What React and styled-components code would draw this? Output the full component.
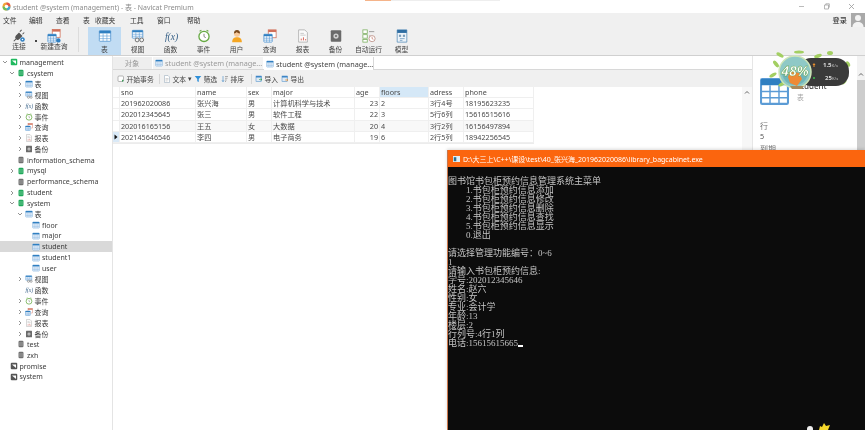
import React from 'react';
import styled, { createGlobalStyle } from 'styled-components';

const GlobalStyle = createGlobalStyle`
  html, body {
    margin: 0;
    background: #fff;
  }
  * {
    box-sizing: border-box;
  }
`;

const Shell = styled.div`
  position: relative;
  width: 865px;
  height: 430px;
  overflow: hidden;
  display: flex;
  flex-direction: column;
  background: #fff;
  color: #444;
  font-family: "Noto Sans", "Noto Sans CJK SC", sans-serif;
  font-size: 7.2px;
  filter: blur(0.4px);
`;

const TitleBar = styled.div`
  position: relative;
  height: 13px;
  flex: none;
  display: flex;
  align-items: center;
  gap: 2px;
  padding-left: 2px;
  color: #8a8a8a;
  font-size: 6.95px;
`;

const TopStrip = styled.div`
  position: absolute;
  top: 0;
  left: 365px;
  width: 135px;
  height: 1px;
  background: linear-gradient(90deg, #f5b48a 0 26px, #eee 26px);
`;

const WindowButtons = styled.div`
  margin-left: auto;
  display: flex;
  align-items: center;
  gap: 18px;
  padding-right: 10px;
`;

const MenuBar = styled.div`
  height: 14px;
  flex: none;
  display: flex;
  align-items: center;
  background: #f0f0f0;
  color: #333;
`;

const MenuItem = styled.span`
  width: ${(p) => p.$w}px;
  padding-left: 3px;
  white-space: nowrap;
  font-size: 6.8px;
`;

const Account = styled.div`
  margin-left: auto;
  display: flex;
  align-items: center;
  gap: 4px;
  color: #333;
  font-weight: 500;
`;

const Avatar = styled.div`
  width: 14px;
  height: 14px;
  background: #a9a9a9;
  overflow: hidden;
`;

const Toolbar = styled.div`
  height: 29px;
  flex: none;
  display: flex;
  background: #f0f0f0;
  border-bottom: 1px solid #d0d0d0;
`;

const ToolGroup = styled.div`
  display: flex;
  padding-left: 2px;
  width: 79px;
  border-right: 1px solid #dcdcdc;
  margin: 0 9px 3px 0;
`;

const Tool = styled.div`
  position: relative;
  width: ${(p) => p.$w || 33}px;
  display: flex;
  flex-direction: column;
  align-items: center;
  justify-content: space-between;
  padding: 2px 0 1px;
  background: ${(p) => (p.$active ? '#c1dcf3' : 'transparent')};
  color: #444;
  font-size: 6.8px;
  line-height: 8px;
  white-space: nowrap;
`;

const ToolCaret = styled.i`
  position: absolute;
  right: -1px;
  top: 13px;
  width: 2px;
  height: 1.500px;
  background: #444;
`;

const Body = styled.div`
  flex: 1;
  min-height: 0;
  display: flex;
`;

const Sidebar = styled.nav`
  width: 113px;
  flex: none;
  padding-top: 1px;
  border-right: 1px solid #e4e4e4;
`;

const TreeRow = styled.div`
  height: 10.85px;
  display: flex;
  align-items: center;
  gap: 2px;
  padding-left: ${(p) => p.$depth * 7.5 + 1.5}px;
  background: ${(p) => (p.$selected ? '#d9d9d9' : 'transparent')};
  color: #3c3c3c;
  font-size: 7px;
  white-space: nowrap;
`;

const Chevron = styled.svg`
  width: 6px;
  height: 6px;
  flex: none;
  visibility: ${(p) => (p.$none ? 'hidden' : 'visible')};
  transform: rotate(${(p) => (p.$open ? 90 : 0)}deg);
`;

const Glyph = styled.svg`
  width: ${(p) => p.$size}px;
  height: ${(p) => p.$size}px;
  flex: none;
`;

const Main = styled.main`
  flex: 1;
  min-width: 0;
  display: flex;
  flex-direction: column;
`;

const TabBar = styled.div`
  height: 14px;
  flex: none;
  display: flex;
  padding-top: 1px;
  border-bottom: 1px solid #d8d8d8;
`;

const Tab = styled.div`
  width: ${(p) => p.$w}px;
  margin-right: 1px;
  margin-bottom: ${(p) => (p.$active ? -1 : 0)}px;
  display: flex;
  align-items: center;
  justify-content: ${(p) => (p.$center ? 'center' : 'flex-start')};
  gap: 2px;
  padding-left: ${(p) => (p.$center ? 0 : 2)}px;
  background: ${(p) => (p.$active ? '#fff' : p.$center ? '#eee' : '#f3f3f3')};
  color: ${(p) => (p.$active ? '#444' : '#9a9a9a')};
  border-right: 1px solid ${(p) => (p.$active ? '#d8d8d8' : 'transparent')};
  font-size: 7.3px;
  white-space: nowrap;
`;

const SubToolbar = styled.div`
  height: 17px;
  flex: none;
  display: flex;
  align-items: center;
  padding-left: 3.5px;
  background: #f0f0f0;
  font-size: 6.8px;
  color: #444;
`;

const SubTool = styled.div`
  width: ${(p) => p.$w}px;
  flex: none;
  display: flex;
  align-items: center;
  gap: 2px;
  white-space: nowrap;
`;

const SubSeparator = styled.i`
  width: 1px;
  height: 10px;
  flex: none;
  margin: 0 ${(p) => p.$gap}px;
  background: #d6d6d6;
`;

const GridArea = styled.div`
  flex: 1;
  min-height: 0;
  display: flex;
`;

const GridPane = styled.div`
  flex: 1;
  min-width: 0;
`;

const DataGrid = styled.div`
  display: grid;
  width: 421px;
  grid-template-columns: 7px 76px 51px 25px 83px 25px 49px 35px 70px;
  grid-template-rows: 11px repeat(4, 11.3px);
  border-bottom: 1px solid #ececec;
`;

const GridCell = styled.div`
  display: flex;
  align-items: center;
  justify-content: ${(p) => (p.$right ? 'flex-end' : 'flex-start')};
  padding: 0 1px;
  background: ${(p) => (p.$fill ? p.$fill : 'transparent')};
  border-right: 1px solid #efefef;
  border-bottom: 1px solid #efefef;
  color: #4a4a4a;
  font-size: 7.2px;
  white-space: nowrap;
  overflow: hidden;
`;

const ScrollColumn = styled.div`
  width: 10px;
  flex: none;
  display: flex;
  justify-content: center;
  padding-top: 3px;
  background: #f7f7f7;
`;

const SidePanel = styled.aside`
  width: 113px;
  flex: none;
  display: flex;
  border-left: 1px solid #e6e6e6;
`;

const SideContent = styled.div`
  flex: 1;
  padding: 22px 0 0 7px;
  color: #555;
`;

const SideHeader = styled.div`
  display: flex;
  gap: 8px;
  margin-bottom: 12.5px;
`;

const SideName = styled.div`
  padding-top: 2px;
  font-size: 8px;
  font-weight: 500;
  line-height: 12px;
  color: #444;
`;

const SideType = styled.div`
  color: #a5a5a5;
  font-size: 6.8px;
  font-weight: 400;
`;

const SideLabel = styled.div`
  font-size: 8px;
  line-height: 11px;
  color: #777;
`;

const SideValue = styled.div`
  font-size: 7.2px;
  line-height: 11px;
  margin-bottom: 1px;
`;

const SideScroll = styled.div`
  width: 8px;
  flex: none;
  padding-top: 16px;
  background: linear-gradient(#f2f2f2 0 24px, #cdcdcd 24px);
  display: flex;
  justify-content: center;
  align-items: flex-start;
`;

const ConsoleWindow = styled.section`
  position: absolute;
  left: 447px;
  top: 150px;
  right: 0;
  bottom: 0;
  display: flex;
  flex-direction: column;
  background: #0c0c0c;
  border-left: 1.5px solid #c9764a;
  box-shadow: 0 -1px 3px rgba(0, 0, 0, 0.15);
`;

const ConsoleTitle = styled.header`
  height: 17px;
  flex: none;
  display: flex;
  align-items: center;
  gap: 3.5px;
  padding-left: 4.5px;
  background: #fb650e;
  color: #fff;
  font-size: 7px;
  white-space: nowrap;
`;

const ConsoleBody = styled.div`
  padding-top: 10px;
  color: #c4c4c4;
  font-family: "Liberation Serif", "Noto Sans CJK SC", serif;
  font-size: 9px;
`;

const ConsoleLine = styled.div`
  height: 9px;
  line-height: 9px;
  padding-left: ${(p) => (p.$indent ? 18 : 0)}px;
  white-space: nowrap;
`;

const Cursor = styled.span`
  display: inline-block;
  width: 4.5px;
  height: 2px;
  margin-bottom: -1px;
  background: #fff;
`;

const SpeedWidget = styled.svg`
  position: absolute;
  left: 768px;
  top: 48px;
  width: 86px;
  height: 46px;
`;

const DesktopPet = styled.svg`
  position: absolute;
  left: 806px;
  top: 423px;
  width: 28px;
  height: 7px;
`;

const ChevronIcon = ({ open, none }) => (
  <Chevron viewBox="0 0 6 6" $open={open} $none={none}>
    <path d="M2 1l2 2-2 2" fill="none" stroke="#777" strokeWidth="0.8" />
  </Chevron>
);

const grid = (x, y, w, h, color, head) => (
  <g>
    <rect x={x} y={y} width={w} height={h} fill="#fff" stroke={color} strokeWidth="1" rx="0.6" />
    <rect x={x} y={y} width={w} height={h / 4} fill={head} />
    <path
      d={`M${x} ${y + h / 2}h${w}M${x} ${y + (h * 3) / 4}h${w}M${x + w / 3} ${y + h / 4}v${(h * 3) / 4}M${x + (w * 2) / 3} ${y + h / 4}v${(h * 3) / 4}`}
      stroke={color}
      strokeWidth="0.7"
      fill="none"
    />
  </g>
);

const glyphs = {
  table: grid(1.5, 2, 13, 12, '#5b9bd5', '#2f7fc1'),
  view: (
    <g>
      {grid(1.5, 1.5, 12, 9, '#5b9bd5', '#2f7fc1')}
      <circle cx="7" cy="12.5" r="2.2" fill="#f4f4f4" stroke="#555" strokeWidth="0.9" />
      <circle cx="12.2" cy="12.5" r="2.2" fill="#f4f4f4" stroke="#555" strokeWidth="0.9" />
    </g>
  ),
  func: (
    <text x="1" y="12" fontFamily="Liberation Serif" fontStyle="italic" fontSize="11" fill="#355f86">
      f(x)
    </text>
  ),
  event: (
    <g>
      <circle cx="8" cy="8.5" r="5.8" fill="#fff" stroke="#66a943" strokeWidth="1.5" />
      <path d="M8 5.5v3.2l2 1.2" stroke="#666" strokeWidth="0.9" fill="none" />
      <path d="M3 2.5l2-1M13 2.5l-2-1" stroke="#66a943" strokeWidth="1.3" />
    </g>
  ),
  user: (
    <g>
      <path d="M2.5 15c0-4 2.4-5.5 5.5-5.5s5.500 1.500 5.500 5.500z" fill="#f5a623" />
      <circle cx="8" cy="5.500" r="3.500" fill="#f7c99b" />
      <path d="M4.500 5c0-2.500 1.500-3.800 3.500-3.800s3.500 1.300 3.500 3.800c-2 0-3-.6-3.800-1.500C7 4.500 6 5 4.500 5z" fill="#7a4a1f" />
    </g>
  ),
  query: (
    <g>
      <rect x="6" y="1" width="9" height="9" fill="#fff" stroke="#d0705a" strokeWidth="0.9" />
      <rect x="6" y="1" width="9" height="2.500" fill="#d0705a" />
      {grid(1, 6, 9.500, 9, '#5b9bd5', '#2f7fc1')}
    </g>
  ),
  report: (
    <g>
      <path d="M3 1h7l3 3v11H3z" fill="#fbfbfb" stroke="#a9a9a9" strokeWidth="0.9" />
      <path d="M5 5h4M5 7h6" stroke="#b5b5b5" strokeWidth="0.8" />
      <path d="M6 13v-2M8.500 13V9.500M11 13v-1.500" stroke="#d9655a" strokeWidth="1.100" />
    </g>
  ),
  backup: (
    <g>
      <rect x="2" y="1.500" width="12" height="13" rx="1" fill="#6a6a6a" />
      <circle cx="8" cy="8" r="3" fill="#cfcfcf" />
      <circle cx="8" cy="8" r="1.200" fill="#6a6a6a" />
    </g>
  ),
  auto: (
    <g>
      <rect x="1" y="1" width="5" height="4" fill="#fff" stroke="#79ae5d" strokeWidth="0.9" />
      <rect x="1" y="6.500" width="5" height="4" fill="#fff" stroke="#79ae5d" strokeWidth="0.9" />
      <rect x="1" y="12" width="5" height="3" fill="#fff" stroke="#79ae5d" strokeWidth="0.9" />
      <path d="M8 3h6M8 8h2" stroke="#8a8a8a" strokeWidth="0.9" />
      <circle cx="11.500" cy="11" r="3.500" fill="#fff" stroke="#b98a80" strokeWidth="0.9" />
      <path d="M11.500 9v2l1.500.8" stroke="#b95a4a" strokeWidth="0.7" fill="none" />
    </g>
  ),
  model: (
    <g>
      <path d="M2.500 1h11v14h-11z" fill="#eef4fa" stroke="#5b8fb9" strokeWidth="0.9" />
      <rect x="2.500" y="1" width="11" height="3.500" fill="#2f6ea3" />
      <rect x="4.500" y="6.500" width="2.500" height="2.500" fill="#7a9db9" />
      <rect x="9" y="6.500" width="2.500" height="2.500" fill="#7a9db9" />
      <path d="M5.500 11h5.500M5.500 13h3" stroke="#5b8fb9" strokeWidth="0.8" />
    </g>
  ),
  plug: (
    <g>
      <path d="M2 14l3-3M9 3l2-2M12 6l2-2" stroke="#555" strokeWidth="1.200" />
      <path d="M4.500 7.500L8 4l4 4-3.500 3.500a2.800 2.800 0 01-4-4z" fill="#555" />
      <circle cx="12" cy="12" r="2.600" fill="#2f7fc1" />
      <circle cx="12" cy="12" r="0.900" fill="#fff" />
    </g>
  ),
  newQuery: (
    <g>
      <rect x="6" y="0.500" width="9" height="9" fill="#fff" stroke="#d0705a" strokeWidth="0.9" />
      <rect x="6" y="0.500" width="9" height="2.500" fill="#d0705a" />
      {grid(1, 6, 9.500, 9, '#5b9bd5', '#2f7fc1')}
      <circle cx="13" cy="13" r="2.500" fill="#2f7fc1" />
    </g>
  ),
  connection: (
    <g>
      <rect x="1.500" y="1.500" width="13" height="13" rx="2" fill="#20b95f" />
      <path d="M4 5l8 7V5z" fill="#fff" />
    </g>
  ),
  closedConnection: (
    <g>
      <rect x="1.500" y="1.500" width="13" height="13" rx="2" fill="#555" />
      <path d="M4 5l8 7V5z" fill="#fff" />
    </g>
  ),
  dbOn: (
    <g>
      <rect x="3" y="1.500" width="10" height="13" rx="2.500" fill="#1fa85a" />
      <path d="M3.500 6h9M3.500 10h9" stroke="#c8f0d6" strokeWidth="0.9" />
    </g>
  ),
  dbOff: (
    <g>
      <rect x="3" y="1.500" width="10" height="13" rx="2.500" fill="#6f6f6f" />
      <path d="M3.500 6h9M3.500 10h9" stroke="#e4e4e4" strokeWidth="0.9" />
    </g>
  ),
  start: (
    <g>
      <rect x="2" y="2" width="11" height="11" rx="2" fill="#fff" stroke="#8a8a8a" strokeWidth="1.200" />
      <path d="M10 9l4 2.500-4 2.500z" fill="#3f9e5c" />
    </g>
  ),
  text: (
    <g>
      <path d="M3 1h7l3 3v11H3z" fill="#fff" stroke="#8fa3b5" strokeWidth="1" />
      <path d="M5 7h6M5 9.500h6M5 12h4" stroke="#9a9a9a" strokeWidth="0.8" />
    </g>
  ),
  filter: <path d="M1.500 2h13L9.500 8v6l-3-1.500V8z" fill="#2f8fd8" />,
  sort: (
    <g>
      <path d="M4 2v11M2 10.500L4 13.500 6 10.500" stroke="#2f7fc1" strokeWidth="1.100" fill="none" />
      <path d="M8 3h6M8 6.500h5M8 10h3.500M8 13h2" stroke="#666" strokeWidth="1" />
    </g>
  ),
  importData: (
    <g>
      <rect x="2" y="2" width="11" height="11" fill="#dfeaf5" stroke="#3d85c6" strokeWidth="1" />
      <rect x="2" y="2" width="11" height="3" fill="#3d85c6" />
      <path d="M8 9h6M11 7l3 2-3 2" stroke="#2e9b57" strokeWidth="1.200" fill="none" />
    </g>
  ),
  exportData: (
    <g>
      <rect x="2" y="2" width="11" height="11" fill="#dfeaf5" stroke="#3d85c6" strokeWidth="1" />
      <rect x="2" y="2" width="11" height="3" fill="#3d85c6" />
      <path d="M8 10h6M11 8l3 2-3 2" stroke="#e08a2e" strokeWidth="1.200" fill="none" />
    </g>
  ),
  app: (
    <g>
      <circle cx="8" cy="8" r="7" fill="#f4a43a" />
      <path d="M8 1a7 7 0 017 7H8z" fill="#e2574c" />
      <path d="M8 8h7a7 7 0 01-7 7z" fill="#3fa9d6" />
      <path d="M8 8v7a7 7 0 01-7-7z" fill="#6cbf5a" />
      <circle cx="8" cy="8" r="3.200" fill="#fff" />
    </g>
  ),
};

const Icon = ({ kind, size = 8 }) => (
  <Glyph viewBox="0 0 16 16" $size={size}>
    {glyphs[kind]}
  </Glyph>
);

const objectGroup = [
  { depth: 2, chevron: true, icon: 'view', label: '视图' },
  { depth: 2, chevron: true, icon: 'func', label: '函数' },
  { depth: 2, chevron: true, icon: 'event', label: '事件' },
  { depth: 2, chevron: true, icon: 'query', label: '查询' },
  { depth: 2, chevron: true, icon: 'report', label: '报表' },
  { depth: 2, chevron: true, icon: 'backup', label: '备份' },
];

const tree = [
  { depth: 0, chevron: true, open: true, icon: 'connection', label: 'management' },
  { depth: 1, chevron: true, open: true, icon: 'dbOn', label: 'csystem' },
  { depth: 2, chevron: true, icon: 'table', label: '表' },
  ...objectGroup,
  { depth: 1, icon: 'dbOff', label: 'information_schema' },
  { depth: 1, chevron: true, icon: 'dbOn', label: 'mysql' },
  { depth: 1, icon: 'dbOff', label: 'performance_schema' },
  { depth: 1, chevron: true, icon: 'dbOn', label: 'student' },
  { depth: 1, chevron: true, open: true, icon: 'dbOn', label: 'system' },
  { depth: 2, chevron: true, open: true, icon: 'table', label: '表' },
  { depth: 3, icon: 'table', label: 'floor' },
  { depth: 3, icon: 'table', label: 'major' },
  { depth: 3, icon: 'table', label: 'student', selected: true },
  { depth: 3, icon: 'table', label: 'student1' },
  { depth: 3, icon: 'table', label: 'user' },
  ...objectGroup.map((row) => (row.icon === 'func' ? { ...row, chevron: false } : row)),
  { depth: 1, icon: 'dbOff', label: 'test' },
  { depth: 1, icon: 'dbOff', label: 'zxh' },
  { depth: 0, icon: 'closedConnection', label: 'promise' },
  { depth: 0, icon: 'closedConnection', label: 'system' },
];

const menus = [
  ['文件', 26],
  ['编辑', 27],
  ['查看', 27],
  ['表', 12],
  ['收藏夹', 35],
  ['工具', 27],
  ['窗口', 30],
  ['帮助', 30],
];

const tools = [
  ['table', '表', true],
  ['view', '视图'],
  ['func', '函数'],
  ['event', '事件'],
  ['user', '用户'],
  ['query', '查询'],
  ['report', '报表'],
  ['backup', '备份'],
  ['auto', '自动运行'],
  ['model', '模型'],
];

const columns = ['sno', 'name', 'sex', 'major', 'age', 'floors', 'adress', 'phone'];

const rows = [
  ['201962020086', '张兴海', '男', '计算机科学与技术', '23', '2', '3行4号', '18195623235'],
  ['202012345645', '张三', '男', '软件工程', '22', '3', '5行6列', '15616515616'],
  ['202016165156', '王五', '女', '大数据', '20', '4', '3行2列', '16156497894'],
  ['202145646546', '李四', '男', '电子商务', '19', '6', '2行5列', '18942256545'],
];

const consoleLines = [
  ['图书馆书包柜预约信息管理系统主菜单'],
  ['1.书包柜预约信息添加', true],
  ['2.书包柜预约信息修改', true],
  ['3.书包柜预约信息删除', true],
  ['4.书包柜预约信息查找', true],
  ['5.书包柜预约信息显示', true],
  ['0.退出', true],
  [''],
  ['请选择管理功能编号：0~6'],
  ['1'],
  ['请输入书包柜预约信息:'],
  ['学号:202012345646'],
  ['姓名:赵六'],
  ['性别:女'],
  ['专业:会计学'],
  ['年龄:13'],
  ['楼层:2'],
  ['行列号:4行1列'],
];

const UpArrow = () => (
  <svg width="6" height="5" viewBox="0 0 6 5">
    <path d="M1 3.500L3 1.500l2 2" fill="none" stroke="#555" strokeWidth="0.9" />
  </svg>
);

const Pointer = () => (
  <svg width="4" height="6" viewBox="0 0 4 6">
    <path d="M0.500 0.500L3.500 3 0.500 5.500z" fill="#111" />
  </svg>
);

const App = () => (
  <Shell>
    <GlobalStyle />
    <TitleBar>
      <TopStrip />
      <Icon kind="app" size={9} />
      <span>student @system (management) - 表 - Navicat Premium</span>
      <WindowButtons>
        <svg width="7" height="7" viewBox="0 0 7 7">
          <path d="M1 3.500h5" stroke="#aaa" strokeWidth="0.8" />
        </svg>
        <svg width="7" height="7" viewBox="0 0 7 7">
          <path d="M1.500 2h4v4h-4zM2.800 2V.8h3.500v3.500H5.500" fill="none" stroke="#999" strokeWidth="0.7" />
        </svg>
        <svg width="7" height="7" viewBox="0 0 7 7">
          <path d="M1 1l5 5M6 1L1 6" stroke="#999" strokeWidth="0.8" />
        </svg>
      </WindowButtons>
    </TitleBar>

    <MenuBar>
      {menus.map(([label, w]) => (
        <MenuItem key={label} $w={w}>
          {label}
        </MenuItem>
      ))}
      <Account>
        登录
        <Avatar>
          <svg width="14" height="14" viewBox="0 0 14 14">
            <circle cx="7" cy="5" r="3" fill="#f3f3f3" />
            <path d="M1.500 14c0-3.500 2.500-5 5.500-5s5.500 1.500 5.500 5z" fill="#f3f3f3" />
          </svg>
        </Avatar>
      </Account>
    </MenuBar>

    <Toolbar>
      <ToolGroup>
        <Tool $w={34}>
          <Icon kind="plug" size={14} />
          连接
          <ToolCaret />
        </Tool>
        <Tool $w={36}>
          <Icon kind="newQuery" size={14} />
          新建查询
        </Tool>
      </ToolGroup>
      {tools.map(([kind, label, active]) => (
        <Tool key={label} $active={active}>
          <Icon kind={kind} size={14} />
          {label}
        </Tool>
      ))}
    </Toolbar>

    <Body>
      <Sidebar>
        {tree.map((row, i) => (
          <TreeRow key={i} $depth={row.depth} $selected={row.selected}>
            <ChevronIcon open={row.open} none={!row.chevron} />
            <Icon kind={row.icon} />
            <span>{row.label}</span>
          </TreeRow>
        ))}
      </Sidebar>

      <Main>
        <TabBar>
          <Tab $w={39} $center>
            对象
          </Tab>
          <Tab $w={110}>
            <Icon kind="table" />
            student @system (manage...
          </Tab>
          <Tab $w={110} $active>
            <Icon kind="table" />
            student @system (manage...
          </Tab>
        </TabBar>

        <SubToolbar>
          <SubTool $w={39}>
            <Icon kind="start" />
            开始事务
          </SubTool>
          <SubSeparator $gap={3} />
          <SubTool $w={31}>
            <Icon kind="text" />
            文本 <span>▾</span>
          </SubTool>
          <SubTool $w={27}>
            <Icon kind="filter" />
            筛选
          </SubTool>
          <SubTool $w={27}>
            <Icon kind="sort" />
            排序
          </SubTool>
          <SubSeparator $gap={3} />
          <SubTool $w={26}>
            <Icon kind="importData" />
            导入
          </SubTool>
          <SubTool $w={30}>
            <Icon kind="exportData" />
            导出
          </SubTool>
        </SubToolbar>

        <GridArea>
          <GridPane>
            <DataGrid>
              <GridCell />
              {columns.map((col) => (
                <GridCell key={col} $fill={col === 'floors' ? '#d5e8f7' : undefined}>
                  {col}
                </GridCell>
              ))}
              {rows.map((row, r) => (
                <React.Fragment key={row[0]}>
                  <GridCell $fill={r === 3 ? '#d9e9f7' : undefined}>{r === 3 ? <Pointer /> : null}</GridCell>
                  {row.map((value, c) => (
                    <GridCell key={c} $right={c === 4} $fill={r === 2 ? '#f8f8f8' : undefined}>
                      {value}
                    </GridCell>
                  ))}
                </React.Fragment>
              ))}
            </DataGrid>
          </GridPane>
          <ScrollColumn>
            <UpArrow />
          </ScrollColumn>
        </GridArea>
      </Main>

      <SidePanel>
        <SideContent>
          <SideHeader>
            <Glyph viewBox="1 1.500 14 14" $size={29}>
              {glyphs.table}
            </Glyph>
            <SideName>
              student
              <SideType>表</SideType>
            </SideName>
          </SideHeader>
          <SideLabel>行</SideLabel>
          <SideValue>5</SideValue>
          <SideLabel>到期</SideLabel>
        </SideContent>
        <SideScroll>
          <UpArrow />
        </SideScroll>
      </SidePanel>
    </Body>

    <SpeedWidget viewBox="0 0 86 46">
      <g fill="#a3cf62">
        <ellipse cx="8" cy="16" rx="4" ry="1.800" transform="rotate(50 8 16)" />
        <ellipse cx="5" cy="27" rx="4" ry="1.600" transform="rotate(-30 5 27)" />
        <ellipse cx="12" cy="7" rx="4" ry="1.800" transform="rotate(30 12 7)" />
        <ellipse cx="31" cy="4" rx="5" ry="1.600" />
        <ellipse cx="50" cy="8" rx="4" ry="1.800" transform="rotate(-20 50 8)" />
        <ellipse cx="62" cy="5" rx="3" ry="2" />
        <ellipse cx="80" cy="16" rx="3" ry="1.800" transform="rotate(60 80 16)" />
        <ellipse cx="76" cy="34" rx="3" ry="1.600" transform="rotate(-40 76 34)" />
        <ellipse cx="14" cy="36" rx="4" ry="1.600" transform="rotate(-30 14 36)" />
      </g>
      <rect x="30" y="10" width="51" height="28" rx="13" fill="#3a3a3a" />
      <circle cx="27" cy="24" r="16" fill="#8fc9c6" stroke="#cfe6b8" strokeWidth="1.500" />
      <path d="M14 24a13 13 0 0026 0z" fill="#5ca8b0" opacity="0.6" />
      <path d="M22 23l9 2 3 6-5 7-7-3-2-6z" fill="#ee8a35" />
      <path d="M22 38h14l-2 3H24z" fill="#a98a5a" />
      <text
        x="27"
        y="28"
        textAnchor="middle"
        fontFamily="Noto Sans"
        fontSize="14"
        fontWeight="700"
        fontStyle="italic"
        fill="#fff"
        stroke="#5f9f3f"
        strokeWidth="0.4"
      >
        48%
      </text>
      <path d="M46 15l1.500 2h-1v2h-1v-2h-1z" fill="#f0922e" />
      <circle cx="46" cy="30" r="1" fill="#3fbf4f" />
      <text x="55" y="19" fontFamily="Noto Sans" fontSize="6" fontWeight="700" fill="#ddd">
        1.5
        <tspan fontSize="4" fill="#999">
          K/s
        </tspan>
      </text>
      <text x="57" y="32" fontFamily="Noto Sans" fontSize="6" fontWeight="700" fill="#ddd">
        25
        <tspan fontSize="4" fill="#999">
          K/s
        </tspan>
      </text>
    </SpeedWidget>

    <ConsoleWindow>
      <ConsoleTitle>
        <svg width="7" height="6" viewBox="0 0 7 6">
          <rect width="7" height="6" fill="#dfeef5" />
          <rect x="0.800" y="1.200" width="2.500" height="4" fill="#2a6f8f" />
        </svg>
        <span>D:\大三上\C++\课设\test\40_张兴海_201962020086\library_bagcabinet.exe</span>
      </ConsoleTitle>
      <ConsoleBody>
        {consoleLines.map(([text, indent], i) => (
          <ConsoleLine key={i} $indent={indent}>
            {text}
          </ConsoleLine>
        ))}
        <ConsoleLine>
          电话:15615615665
          <Cursor />
        </ConsoleLine>
      </ConsoleBody>
    </ConsoleWindow>

    <DesktopPet viewBox="0 0 28 7">
      <circle cx="4" cy="6" r="3" fill="#eee" />
      <path d="M13 7l1-4 2 1 2-4 2 3 4-1-2 5z" fill="#f6d82b" />
    </DesktopPet>
  </Shell>
);

export default App;
